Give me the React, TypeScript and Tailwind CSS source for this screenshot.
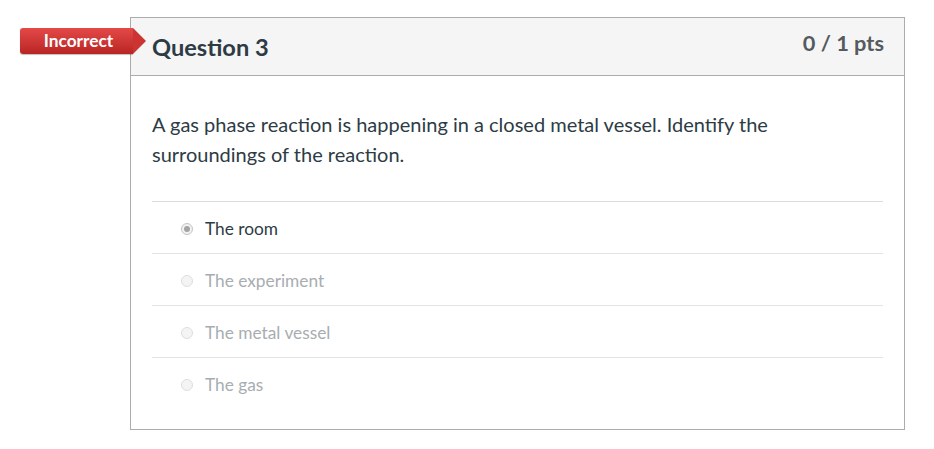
import React from 'react';

const answers = [
    { text: 'The room', selected: true },
    { text: 'The experiment', selected: false },
    { text: 'The metal vessel', selected: false },
    { text: 'The gas', selected: false },
];

const Radio = ({ checked }: { checked: boolean }) => (
    <span
        className={`flex h-[12px] w-[12px] items-center justify-center rounded-full border ${
            checked ? 'border-[#c4c4c4] bg-[#f2f2f2]' : 'border-[#dedede] bg-[#f4f4f4]'
        }`}
    >
        {checked && <span className="h-[6px] w-[6px] rounded-full bg-[#a3a3a3]" />}
    </span>
);

export default function App() {
    return (
        <div className="min-h-[449px] w-[934px] bg-white pt-[17px] font-['Lato','Noto_Sans',sans-serif]">
            <div className="relative ml-[130px] w-[775px] border border-[#acacac] bg-white">
                {/* incorrect flag */}
                <div className="absolute left-[-111px] top-[10px] flex h-[26px] items-center">
                    <div className="flex h-[26px] w-[113px] items-center justify-center rounded-l-[3px] bg-gradient-to-b from-[#e44847] to-[#b92524] pl-[4px] text-[17.3px] font-bold leading-none text-white shadow-[0_1px_1px_rgba(0,0,0,0.25)]">
                        Incorrect
                    </div>
                    <div className="h-0 w-0 border-y-[13px] border-l-[13px] border-y-transparent border-l-[#cc3333]" />
                </div>

                <div className="flex h-[58px] items-center justify-between border-b border-[#acacac] bg-[#f5f5f5] pl-[21px] pr-[20px]">
                    <h2 className="mt-[3px] text-[23.6px] font-bold text-[#2d3b45]">Question 3</h2>
                    <span className="self-start pt-[10px] text-[21.8px] font-bold leading-[30px] text-[#555a5e]">0 / 1 pts</span>
                </div>

                <div className="px-[21px] pb-[20px] pt-[33px]">
                    <p className="text-[20px] leading-[30px] text-[#2d3b45]">
                        A gas phase reaction is happening in a closed metal vessel. Identify the surroundings of the reaction.
                    </p>

                    <div className="mt-[32px]">
                        {answers.map((answer) => (
                            <div
                                key={answer.text}
                                className="flex h-[52px] items-center gap-[12px] border-t border-[#e4e4e4] pl-[29px] pt-[2px] first:border-[#dcdcdc]"
                            >
                                <Radio checked={answer.selected} />
                                <span
                                    className={`text-[17.3px] ${
                                        answer.selected ? 'text-[#2d3b45]' : 'text-[#a8adb1]'
                                    }`}
                                >
                                    {answer.text}
                                </span>
                            </div>
                        ))}
                    </div>
                </div>
            </div>
        </div>
    );
}
